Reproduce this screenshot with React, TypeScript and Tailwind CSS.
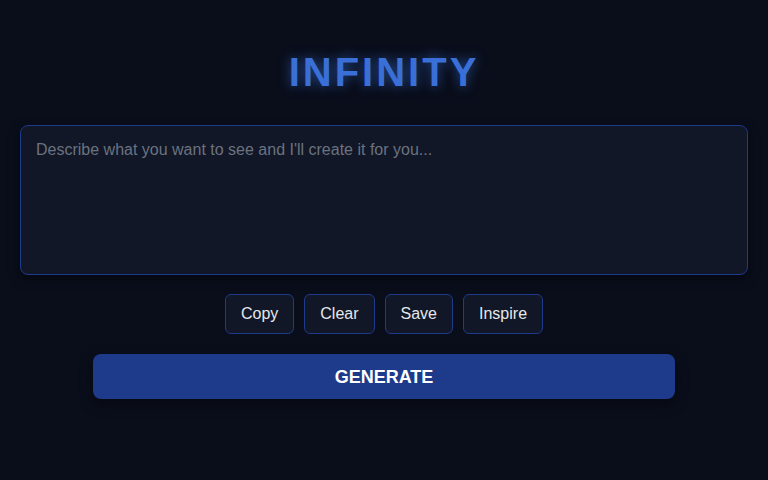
import { useState } from 'react'

const ACTIONS = ['Copy', 'Clear', 'Save', 'Inspire']

export default function App() {
  const [prompt, setPrompt] = useState('')

  return (
    <div className="min-h-[480px] w-full bg-[#0a0e1b] px-5 pt-[49px] font-['Liberation_Sans',Arial,sans-serif]">
      <h1 className="mb-[30px] text-center text-[40px] font-bold leading-[46px] tracking-[3px] text-[#3a6fd8] [text-shadow:0_0_12px_rgba(59,130,246,0.55)]">
        INFINITY
      </h1>

      <textarea
        value={prompt}
        onChange={(e) => setPrompt(e.target.value)}
        placeholder="Describe what you want to see and I'll create it for you..."
        className="block h-[150px] w-full resize-none rounded-lg border border-[#1e3a8a] bg-[#111726] p-[15px] text-base leading-[18px] text-gray-200 placeholder-[#6b7280] shadow-[0_4px_12px_rgba(0,0,0,0.5)] outline-none"
      />

      <div className="mt-[19px] flex justify-center gap-[10px]">
        {ACTIONS.map((a) => (
          <button
            key={a}
            className="rounded-md border border-[#1e3a8a] bg-[#111726] px-[15px] py-[10px] text-base leading-[18px] text-[#e5e7eb]"
          >
            {a}
          </button>
        ))}
      </div>

      <div className="mt-5 flex justify-center">
        <button className="h-[45px] w-[80%] rounded-lg bg-[#1e3a8a] text-lg font-bold text-white shadow-[0_4px_14px_rgba(0,0,0,0.45)]">
          GENERATE
        </button>
      </div>
    </div>
  )
}
